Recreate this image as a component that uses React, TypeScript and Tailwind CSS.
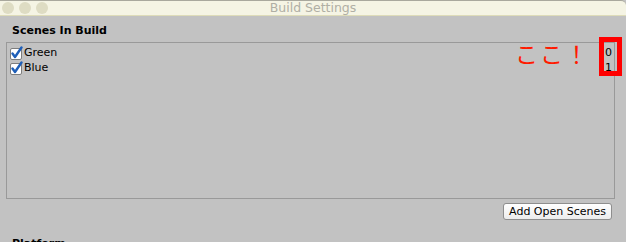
import React from "react";

const font = { fontFamily: '"Lucida Grande", "DejaVu Sans", "Open Sans", sans-serif' };

function Check() {
  return (
    <svg width="14" height="14" viewBox="0 0 14 14" className="shrink-0">
      <rect x="1.5" y="2.5" width="11" height="11" rx="1.5" fill="#ffffff" stroke="#7d7d7d" />
      <path d="M3.5 7.5 L6 11 L12.5 1.5" fill="none" stroke="#1f5fb8" strokeWidth="2.4" strokeLinecap="round" strokeLinejoin="round" />
    </svg>
  );
}

function Row({ name, idx }: { name: string; idx: number }) {
  return (
    <div className="flex items-center h-[15px] pl-[2px] pr-[2px]">
      <Check />
      <span className="ml-[1px] text-[11px] text-black leading-none">{name}</span>
      <span className="ml-auto text-[11px] text-black leading-none">{idx}</span>
    </div>
  );
}

export default function App() {
  return (
    <div className="relative w-[626px] h-[242px] overflow-hidden bg-[#c2c2c2]" style={font}>
      <div className="relative flex items-center h-4 bg-[#f5f4e4] border-t border-[#a9a89d] border-b border-b-[#dedcb9] rounded-tr-[5px]">
        <div className="flex gap-[5px] pl-[2px]">
          <div className="w-3 h-3 rounded-full bg-[#dedcc3]" />
          <div className="w-3 h-3 rounded-full bg-[#dedcc3]" />
          <div className="w-3 h-3 rounded-full bg-[#dedcc3]" />
        </div>
        <div className="absolute inset-0 flex items-center justify-center text-[12.5px] text-[#b0afa5]">
          Build Settings
        </div>
      </div>
      <div className="flex flex-col px-[6px] pt-[8px] pr-[11px]">
        <div className="pl-[6px] text-[11px] font-bold text-black leading-[14px]">Scenes In Build</div>
        <div className="mt-[4px] h-[157px] border border-[#999999] pt-[2px]">
          <Row name="Green" idx={0} />
          <Row name="Blue" idx={1} />
        </div>
        <div className="flex justify-end mt-[4px] pr-[3px]">
          <button className="h-[17px] px-[5px] rounded-[3px] border border-[#8e8e8e] bg-gradient-to-b from-[#ffffff] to-[#ececec] text-[11px] text-black leading-none">
            Add Open Scenes
          </button>
        </div>
        <div className="mt-[17px] pl-[6px] text-[11px] font-bold text-black leading-[14px]">Platform</div>
      </div>
      <div
        className="absolute left-[515px] top-[42px] text-[23px] font-normal text-[#ff1a00] leading-none tracking-[2px]"
        style={{ fontFamily: '"Noto Sans CJK JP", sans-serif' }}
      >
        ここ！
      </div>
      <div className="absolute left-[599px] top-[37px] w-[23px] h-[39px] border-[5px] border-[#ff0000]" />
    </div>
  );
}
